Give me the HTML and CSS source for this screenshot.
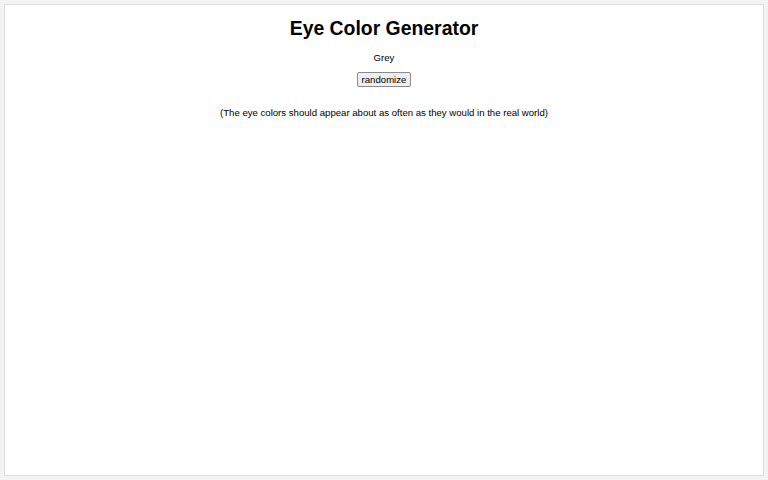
FILE: index.html
```html
<!DOCTYPE html>
<html lang="en">
<head>
    <meta charset="UTF-8">
    <title>Eye Color Generator</title>
    <link rel="stylesheet" href="styles.css">
</head>
<body>
    <div class="page">
        <h1>Eye Color Generator</h1>
        <p class="result" id="result">Grey</p>
        <button class="randomize" id="randomize">randomize</button>
        <p class="note">(The eye colors should appear about as often as they would in the real world)</p>
    </div>
</body>
</html>
```

FILE: styles.css
```css
* {
    margin: 0;
    padding: 0;
    box-sizing: border-box;
}

html, body {
    height: 100%;
}

body {
    background: #f3f3f3;
    padding: 4px;
    font-family: 'Liberation Sans', Arial, sans-serif;
    color: #000;
}

.page {
    height: 100%;
    background: #fff;
    border: 1px solid #dcdcdc;
    text-align: center;
    padding-top: 12px;
}

h1 {
    font-size: 19.4px;
    font-weight: bold;
    line-height: 22px;
    margin-bottom: 13px;
}

.result {
    font-size: 9.6px;
    line-height: 12px;
    margin-bottom: 8px;
}

.randomize {
    display: block;
    margin: 0 auto;
    height: 15px;
    font-family: 'Liberation Sans', Arial, sans-serif;
    font-size: 9.6px;
    padding: 0 4px;
    background: #efefef;
    border: 1px solid #8a8a8a;
    border-radius: 2px;
    color: #000;
}

.note {
    font-size: 9.6px;
    line-height: 12px;
    margin-top: 20px;
}
```
